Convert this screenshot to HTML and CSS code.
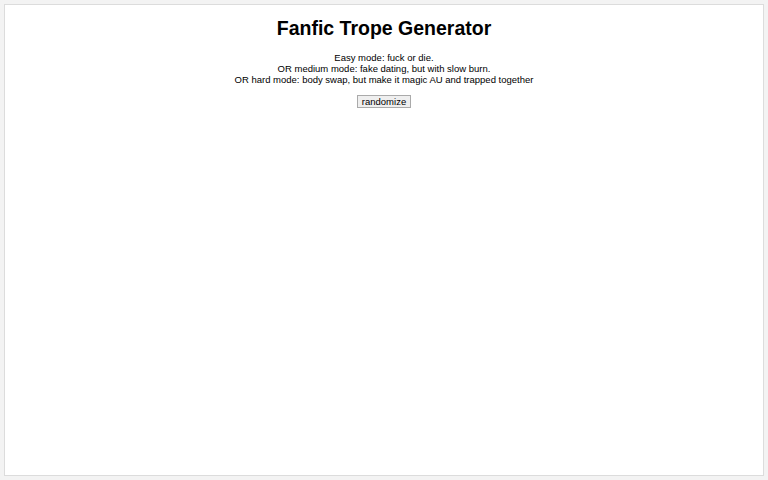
FILE: index.html
```html
<!DOCTYPE html>
<html lang="en">
<head>
    <meta charset="UTF-8">
    <meta name="viewport" content="width=device-width, initial-scale=1.0">
    <title>Fanfic Trope Generator</title>
    <link rel="stylesheet" href="styles.css">
</head>
<body>
    <div id="page">
        <h1>Fanfic Trope Generator</h1>
        <p id="tropes">
            Easy mode: fuck or die.<br>
            OR medium mode: fake dating, but with slow burn.<br>
            OR hard mode: body swap, but make it magic AU and trapped together
        </p>
        <div>
            <button id="randomize">randomize</button>
        </div>
    </div>
</body>
</html>
```

FILE: styles.css
```css
body{
    margin: 4px;
    background-color: #f3f3f3;
    font-family: "Liberation Sans", Arial, sans-serif;
}
#page{
    background-color: white;
    border: 1px solid #dcdcdc;
    height: 472px;
    box-sizing: border-box;
    text-align: center;
    padding-top: 13px;
}
h1{
    margin: 0;
    font-size: 19.5px;
    line-height: 20px;
}
#tropes{
    font-size: 9.5px;
    line-height: 11px;
    margin: 14px 0 6px;
}
#randomize{
    font-family: "Liberation Sans", Arial, sans-serif;
    font-size: 9.5px;
    line-height: 11px;
    padding: 0 4px;
    background-color: #efefef;
    border: 1px solid #aaa;
    border-radius: 0;
}
```
